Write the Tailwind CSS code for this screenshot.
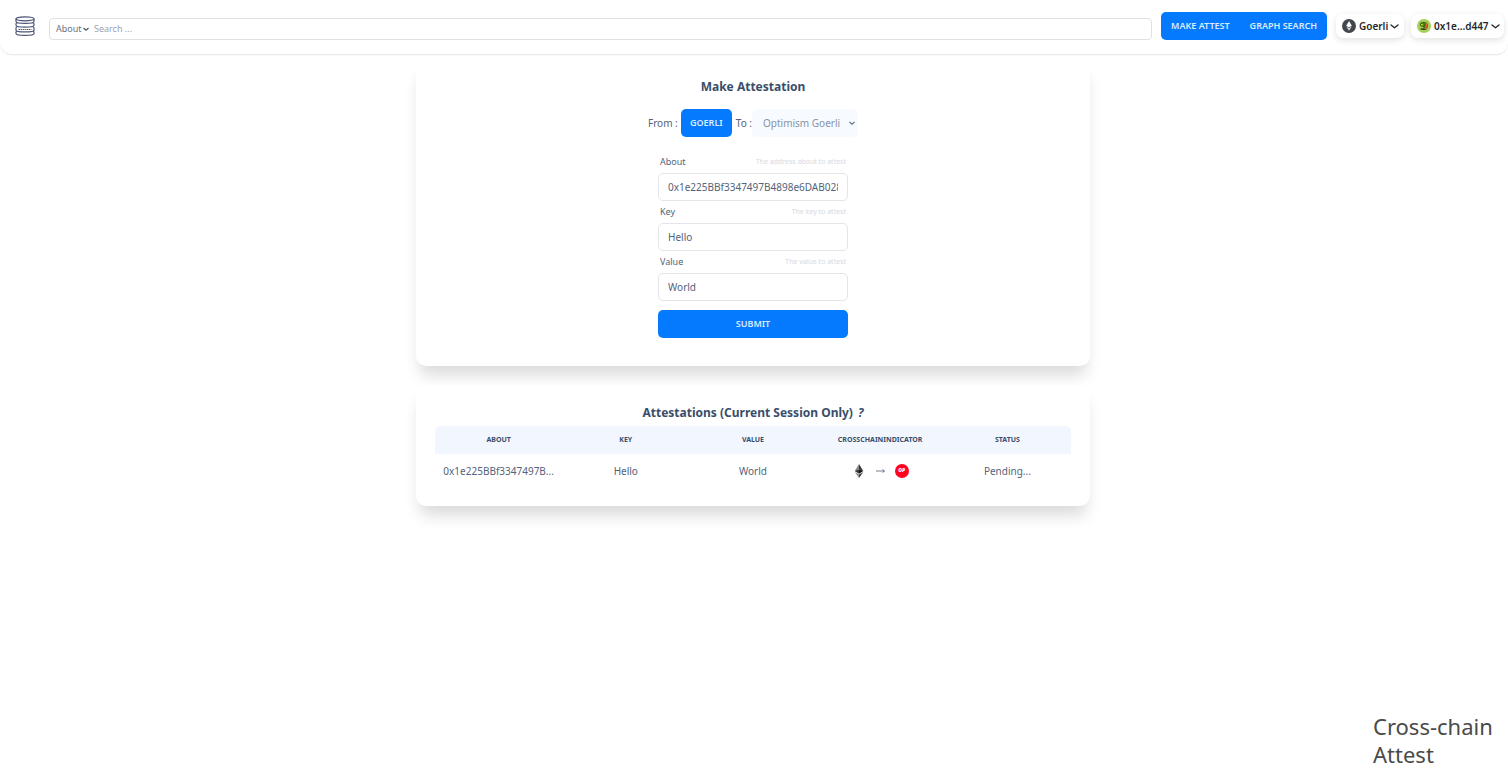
<!DOCTYPE html>
<html lang="en">
<head>
<meta charset="utf-8">
<meta name="viewport" content="width=device-width, initial-scale=1">
<title>Cross-chain Attest</title>
<script src="https://cdn.jsdelivr.net/npm/@tailwindcss/browser@4"></script>
</head>
<body class="flex min-h-screen flex-col bg-white font-['Noto_Sans','Open_Sans',sans-serif] text-[10px] leading-4 text-[#53637a]">
  <header class="flex h-[55px] items-start rounded-b-xl border-b border-[#e9eaec] bg-white pl-[15px] pr-1 pt-3 shadow-[0_1px_1px_rgba(0,0,0,0.03)]">
    <a href="#" aria-label="Home" class="mt-1 block">
      <svg class="size-5" viewBox="0 0 20 20" fill="none" stroke="#4b5275" stroke-width="1.2">
        <ellipse cx="10" cy="2.8" rx="9" ry="2"/>
        <path d="M1 2.800v2.600c0 1.100 4 1.900 9 1.900s9-.8 9-1.900V2.800"/>
        <path d="M2.200 6.700C1.300 7 1 7.400 1 7.800v1.400c0 1.100 4 1.900 9 1.900s9-.8 9-1.900V7.800c0-.4-.3-.8-1.200-1.100"/>
        <path d="M2 10.800c-.7.300-1 .7-1 1.100v2.300c0 1 4 1.700 9 1.700s9-.7 9-1.700v-2.300c0-.4-.3-.8-1-1.100"/>
        <path d="M2 15c-.7.300-1 .6-1 1v1.400c0 1.100 4 1.900 9 1.900s9-.8 9-1.900V16c0-.4-.3-.7-1-1"/>
        <path d="M3.500 13.500h13" stroke="#555" stroke-dasharray="1.500 .6"/>
      </svg>
    </a>
    <form class="ml-[14px] mr-[9px] mt-[6px] flex h-[22px] flex-1 items-center rounded border border-[#dfe1e5] pl-[6px] text-[9px]">
      <span class="relative flex items-center">
        <select aria-label="Search field" class="h-5 w-9 appearance-none bg-transparent text-[#6b7280]"><option>About</option><option>Key</option></select>
        <svg class="pointer-events-none absolute right-[2px] size-2" viewBox="0 0 8 8" fill="none" stroke="#4b5563" stroke-width="1.2"><path d="M1.500 3L4 5.300 6.500 3"/></svg>
      </span>
      <input type="text" aria-label="Search" placeholder="Search ..." class="ml-[2px] min-w-0 flex-1 bg-transparent outline-none placeholder:text-[#9ca3af]">
    </form>
    <nav class="flex h-7 overflow-hidden rounded-[5px] bg-[#057aff] text-[9px] font-semibold text-[#dcecff]">
      <button type="button" class="px-[10px]">MAKE ATTEST</button>
      <button type="button" class="px-[10px]">GRAPH SEARCH</button>
    </nav>
    <button type="button" class="ml-[9px] mt-[2px] flex h-6 w-[68px] items-center rounded-[7px] bg-white pl-[6px] text-[10px] font-semibold text-[#25292e] shadow-[0_2px_6px_rgba(0,0,0,0.12)]">
      <svg class="mr-[3px] size-[14px] shrink-0" viewBox="0 0 14 14"><circle cx="7" cy="7" r="7" fill="#42464d"/><path d="M7 2L4.200 6.800 7 8.400l2.800-1.600z" fill="#fff"/><path d="M4.200 7.600L7 11.800l2.800-4.200L7 9.200z" fill="#ddd"/></svg>
      Goerli
      <svg class="ml-[2px] size-[9px] shrink-0" viewBox="0 0 9 9" fill="none" stroke="#25292e" stroke-width="1.400" stroke-linecap="round" stroke-linejoin="round"><path d="M1 3l3.500 2.800L8 3"/></svg>
    </button>
    <button type="button" class="ml-[7px] mt-[2px] flex h-6 w-[93px] items-center rounded-[7px] bg-white pl-[6px] text-[10px] font-semibold text-[#25292e] shadow-[0_2px_6px_rgba(0,0,0,0.12)]">
      <svg class="mr-[3px] size-[14px] shrink-0" viewBox="0 0 14 14"><circle cx="7" cy="7" r="7" fill="#a5cf58"/><path d="M2.800 5c.8-2 4.200-3 6.700-1.500 2.200 1.600 2 5.500-.3 7-2 .9-4.700.5-6-.7 2-.1 3.400-.8 3.200-1.900-1.800.4-3.800-.6-3.600-2.900z" fill="#447019"/><path d="M8 3.300c3.300.8 3.300 5.800.3 7.200l-1.600-.5c2.200-1.200 2.600-4.200 1.300-6.700z" fill="#e0632c"/><path d="M3.800 5.300l2-.9.700 1.500-2 .8z" fill="#b4d51b"/><path d="M3.500 9.900l5 .7" stroke="#26310e" stroke-width=".9"/></svg>
      0x1e...d447
      <svg class="ml-[2px] size-[9px] shrink-0" viewBox="0 0 9 9" fill="none" stroke="#25292e" stroke-width="1.400" stroke-linecap="round" stroke-linejoin="round"><path d="M1 3l3.500 2.800L8 3"/></svg>
    </button>
  </header>

  <div class="mt-1 pr-[2px]">
  <main class="mx-auto flex w-full max-w-[674px] flex-col gap-[19px]">
    <section class="flex flex-col items-center rounded-[10px] bg-white px-[19px] pb-7 pt-[18px] shadow-[0_13px_16px_-4px_rgba(0,0,0,0.15)]">
      <h2 class="text-[12px] font-bold leading-5 text-[#394e6a]">Make Attestation</h2>
      <div class="mt-3 flex items-center">
        <span>From :</span>
        <button type="button" class="ml-[3px] mr-1 h-7 w-[51px] rounded-[5px] bg-[#057aff] text-[9px] font-semibold text-[#dcecff]">GOERLI</button>
        <label for="target">To :</label>
        <span class="relative flex items-center">
          <select id="target" class="h-7 w-[106px] appearance-none rounded-[5px] bg-[#f7faff] pl-[11px] text-[#8793a5]"><option>Optimism Goerli</option><option>Goerli</option></select>
          <svg class="pointer-events-none absolute right-[2px] size-2" viewBox="0 0 8 8" fill="none" stroke="#66758a" stroke-width="1.200"><path d="M1.500 3l2.500 2.300L6.500 3"/></svg>
        </span>
      </div>
      <form class="mt-[14px] flex w-[190px] flex-col">
        <div class="flex h-[22px] items-center justify-between px-[2px]"><label for="about" class="text-[9px]">About</label><span class="text-[7px] text-[#d5d9e0]">The address about to attest</span></div>
        <input id="about" type="text" value="0x1e225BBf3347497B4898e6DAB028A3c1" class="h-7 w-full rounded-[5px] border border-[#e3e5e9] px-[9px] outline-none">
        <div class="flex h-[22px] items-center justify-between px-[2px]"><label for="key" class="text-[9px]">Key</label><span class="text-[7px] text-[#d5d9e0]">The key to attest</span></div>
        <input id="key" type="text" value="Hello" class="h-7 w-full rounded-[5px] border border-[#e3e5e9] px-[9px] outline-none">
        <div class="flex h-[22px] items-center justify-between px-[2px]"><label for="value" class="text-[9px]">Value</label><span class="text-[7px] text-[#d5d9e0]">The value to attest</span></div>
        <input id="value" type="text" value="World" class="h-7 w-full rounded-[5px] border border-[#e3e5e9] px-[9px] outline-none">
        <button type="button" class="mt-[9px] h-7 rounded-[5px] bg-[#057aff] text-[9px] font-semibold text-[#dcecff]">SUBMIT</button>
      </form>
    </section>

    <section class="rounded-[10px] bg-white px-[19px] pb-[19px] pt-[18px] shadow-[0_13px_16px_-4px_rgba(0,0,0,0.15)]">
      <h2 class="text-center text-[12px] font-bold leading-5 text-[#394e6a]">Attestations (Current Session Only) <em class="ml-[2px]">?</em></h2>
      <table class="mt-[3px] w-full table-fixed text-center">
        <thead>
          <tr class="h-7 bg-[#f2f7ff] text-[7px] text-[#394e6a]">
            <th class="rounded-tl-[5px] font-bold">ABOUT</th><th class="font-bold">KEY</th><th class="font-bold">VALUE</th><th class="font-bold">CROSSCHAININDICATOR</th><th class="rounded-tr-[5px] font-bold">STATUS</th>
          </tr>
        </thead>
        <tbody>
          <tr class="h-[33px]">
            <td class="whitespace-nowrap">0x1e225BBf3347497B...</td><td>Hello</td><td>World</td>
            <td>
              <div class="flex items-center justify-center gap-[10px]">
                <svg class="size-[14px]" viewBox="0 0 14 14"><path d="M7 0L2.700 7.100 7 5.200z" fill="#8a8a8a"/><path d="M7 0l4.300 7.100L7 5.200z" fill="#393939"/><path d="M7 5.200L2.700 7.100 7 9.700z" fill="#393939"/><path d="M7 5.200l4.300 1.900L7 9.700z" fill="#141414"/><path d="M2.700 8L7 14v-3.500z" fill="#8c8c8c"/><path d="M11.300 8L7 14v-3.500z" fill="#3c3c3b"/></svg>
                <svg class="h-2 w-[9px]" viewBox="0 0 9 8" fill="none" stroke="#53637a" stroke-width=".8"><path d="M0 4h8.500M6.500 2.500L8.500 4l-2 1.500"/></svg>
                <span class="flex size-[14px] items-center justify-center rounded-full bg-[#ff0420] text-[5px] font-black italic leading-none text-white">OP</span>
              </div>
            </td>
            <td>Pending...</td>
          </tr>
        </tbody>
      </table>
    </section>
  </main>
  </div>

  <footer class="mt-auto flex justify-end pb-3 pr-[11px]">
    <p class="w-[124px] text-[22px] leading-7 text-[#4a4a4a]">Cross-chain Attest</p>
  </footer>
</body>
</html>
